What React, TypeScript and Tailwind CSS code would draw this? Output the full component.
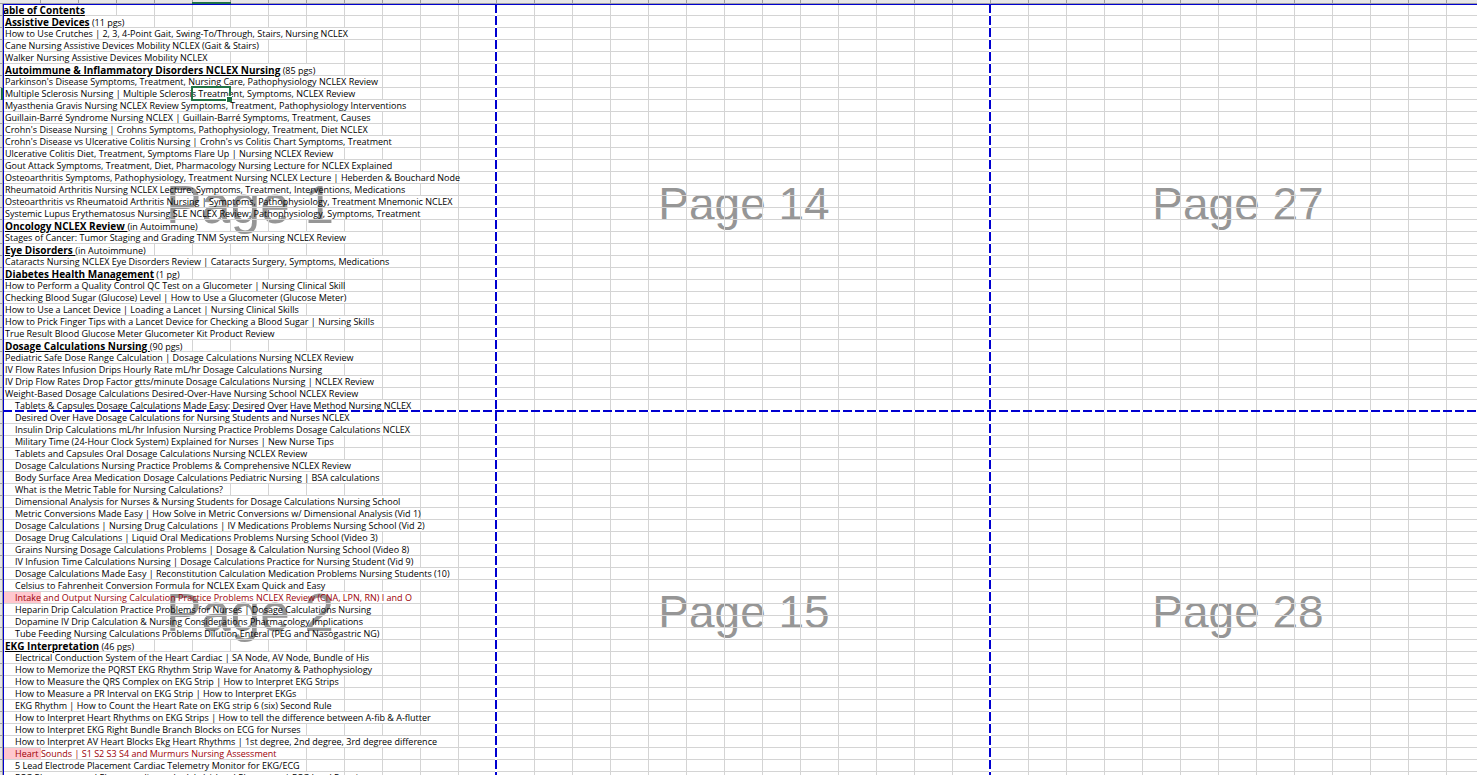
interface Row {
  // number of columns the text spills over
  span: number
  text?: string
  title?: string
  indent?: boolean
  flagged?: boolean
}

const COLUMNS = 39

const rows: Row[] = [
  { title: 'able of Contents', span: 3 },
  { title: 'Assistive Devices', text: '(11 pgs)', span: 4 },
  { text: 'How to Use Crutches | 2, 3, 4-Point Gait, Swing-To/Through, Stairs, Nursing NCLEX', span: 10 },
  { text: 'Cane Nursing Assistive Devices Mobility NCLEX (Gait & Stairs)', span: 7 },
  { text: 'Walker Nursing Assistive Devices Mobility NCLEX', span: 6 },
  { title: 'Autoimmune & Inflammatory Disorders NCLEX Nursing', text: '(85 pgs)', span: 9 },
  { text: 'Parkinson\'s Disease Symptoms, Treatment, Nursing Care, Pathophysiology NCLEX Review', span: 10 },
  { text: 'Multiple Sclerosis Nursing | Multiple Sclerosis Treatment, Symptoms, NCLEX Review', span: 10 },
  { text: 'Myasthenia Gravis Nursing NCLEX Review Symptoms, Treatment, Pathophysiology Interventions', span: 11 },
  { text: 'Guillain-Barré Syndrome Nursing NCLEX | Guillain-Barré Symptoms, Treatment, Causes', span: 10 },
  { text: 'Crohn\'s Disease Nursing | Crohns Symptoms, Pathophysiology, Treatment, Diet NCLEX', span: 10 },
  { text: 'Crohn\'s Disease vs Ulcerative Colitis Nursing | Crohn\'s vs Colitis Chart Symptoms, Treatment', span: 11 },
  { text: 'Ulcerative Colitis Diet, Treatment, Symptoms Flare Up | Nursing NCLEX Review', span: 9 },
  { text: 'Gout Attack Symptoms, Treatment, Diet, Pharmacology Nursing Lecture for NCLEX Explained', span: 11 },
  { text: 'Osteoarthritis Symptoms, Pathophysiology, Treatment Nursing NCLEX Lecture | Heberden & Bouchard Node', span: 12 },
  { text: 'Rheumatoid Arthritis Nursing NCLEX Lecture: Symptoms, Treatment, Interventions, Medications', span: 11 },
  { text: 'Osteoarthritis vs Rheumatoid Arthritis Nursing | Symptoms, Pathophysiology, Treatment Mnemonic NCLEX', span: 12 },
  { text: 'Systemic Lupus Erythematosus Nursing SLE NCLEX Review: Pathophysiology, Symptoms, Treatment', span: 12 },
  { title: 'Oncology NCLEX Review ', text: '(in Autoimmune)', span: 6 },
  { text: 'Stages of Cancer: Tumor Staging and Grading TNM System Nursing NCLEX Review', span: 10 },
  { title: 'Eye Disorders ', text: '(in Autoimmune)', span: 4 },
  { text: 'Cataracts Nursing NCLEX Eye Disorders Review | Cataracts Surgery, Symptoms, Medications', span: 11 },
  { title: 'Diabetes Health Management', text: '(1 pg)', span: 5 },
  { text: 'How to Perform a Quality Control QC Test on a Glucometer | Nursing Clinical Skill', span: 9 },
  { text: 'Checking Blood Sugar (Glucose) Level | How to Use a Glucometer (Glucose Meter)', span: 10 },
  { text: 'How to Use a Lancet Device | Loading a Lancet | Nursing Clinical Skills', span: 8 },
  { text: 'How to Prick Finger Tips with a Lancet Device for Checking a Blood Sugar | Nursing Skills', span: 10 },
  { text: 'True Result Blood Glucose Meter Glucometer Kit Product Review', span: 8 },
  { title: 'Dosage Calculations Nursing ', text: '(90 pgs)', span: 5 },
  { text: 'Pediatric Safe Dose Range Calculation | Dosage Calculations Nursing NCLEX Review', span: 10 },
  { text: 'IV Flow Rates Infusion Drips Hourly Rate mL/hr Dosage Calculations Nursing', span: 9 },
  { text: 'IV Drip Flow Rates Drop Factor gtts/minute Dosage Calculations Nursing | NCLEX Review', span: 10 },
  { text: 'Weight-Based Dosage Calculations Desired-Over-Have Nursing School NCLEX Review', span: 10 },
  { text: 'Tablets & Capsules Dosage Calculations Made Easy: Desired Over Have Method Nursing NCLEX', indent: true, span: 11 },
  { text: 'Desired Over Have Dosage Calculations for Nursing Students and Nurses NCLEX', indent: true, span: 10 },
  { text: 'Insulin Drip Calculations mL/hr Infusion Nursing Practice Problems Dosage Calculations NCLEX', indent: true, span: 11 },
  { text: 'Military Time (24-Hour Clock System) Explained for Nurses | New Nurse Tips', indent: true, span: 9 },
  { text: 'Tablets and Capsules Oral Dosage Calculations Nursing NCLEX Review', indent: true, span: 9 },
  { text: 'Dosage Calculations Nursing Practice Problems & Comprehensive NCLEX Review', indent: true, span: 10 },
  { text: 'Body Surface Area Medication Dosage Calculations Pediatric Nursing | BSA calculations', indent: true, span: 10 },
  { text: 'What is the Metric Table for Nursing Calculations?', indent: true, span: 6 },
  { text: 'Dimensional Analysis for Nurses & Nursing Students for Dosage Calculations Nursing School', indent: true, span: 11 },
  { text: 'Metric Conversions Made Easy | How Solve in Metric Conversions w/ Dimensional Analysis (Vid 1)', indent: true, span: 11 },
  { text: 'Dosage Calculations | Nursing Drug Calculations | IV Medications Problems Nursing School (Vid 2)', indent: true, span: 12 },
  { text: 'Dosage Drug Calculations | Liquid Oral Medications Problems Nursing School (Video 3)', indent: true, span: 10 },
  { text: 'Grains Nursing Dosage Calculations Problems | Dosage & Calculation Nursing School (Video 8)', indent: true, span: 11 },
  { text: 'IV Infusion Time Calculations Nursing | Dosage Calculations Practice for Nursing Student (Vid 9)', indent: true, span: 11 },
  { text: 'Dosage Calculations Made Easy | Reconstitution Calculation Medication Problems Nursing Students (10)', indent: true, span: 12 },
  { text: 'Celsius to Fahrenheit Conversion Formula for NCLEX Exam Quick and Easy', indent: true, span: 9 },
  { text: 'Intake and Output Nursing Calculation Practice Problems NCLEX Review (CNA, LPN, RN) I and O', indent: true, flagged: true, span: 11 },
  { text: 'Heparin Drip Calculation Practice Problems for Nurses | Dosage Calculations Nursing', indent: true, span: 10 },
  { text: 'Dopamine IV Drip Calculation & Nursing Considerations Pharmacology Implications', indent: true, span: 10 },
  { text: 'Tube Feeding Nursing Calculations Problems Dilution Enteral (PEG and Nasogastric NG)', indent: true, span: 10 },
  { title: 'EKG Interpretation', text: '(46 pgs)', span: 4 },
  { text: 'Electrical Conduction System of the Heart Cardiac | SA Node, AV Node, Bundle of His', indent: true, span: 10 },
  { text: 'How to Memorize the PQRST EKG Rhythm Strip Wave for Anatomy & Pathophysiology', indent: true, span: 10 },
  { text: 'How to Measure the QRS Complex on EKG Strip | How to Interpret EKG Strips', indent: true, span: 9 },
  { text: 'How to Measure a PR Interval on EKG Strip | How to Interpret EKGs', indent: true, span: 8 },
  { text: 'EKG Rhythm | How to Count the Heart Rate on EKG strip 6 (six) Second Rule', indent: true, span: 9 },
  { text: 'How to Interpret Heart Rhythms on EKG Strips | How to tell the difference between A-fib & A-flutter', indent: true, span: 11 },
  { text: 'How to Interpret EKG Right Bundle Branch Blocks on ECG for Nurses', indent: true, span: 8 },
  { text: 'How to Interpret AV Heart Blocks Ekg Heart Rhythms | 1st degree, 2nd degree, 3rd degree difference', indent: true, span: 12 },
  { text: 'Heart Sounds | S1 S2 S3 S4 and Murmurs Nursing Assessment', indent: true, flagged: true, span: 8 },
  { text: '5 Lead Electrode Placement Cardiac Telemetry Monitor for EKG/ECG', indent: true, span: 8 },
  { text: 'ECG Placement and Electrocardiography (ekg) | Lead Placement | ECG Lead Practice', indent: true, span: 9 },
]

const pages = [1, 14, 27, 2, 15, 28]

function cellClass(row: Row, first: boolean) {
  if (first)
    return 'pl-0'
  if (row.flagged)
    return 'pl-3 text-[#9c0006] bg-[linear-gradient(#ffc7ce,#ffc7ce)] bg-[length:38px_100%] bg-no-repeat'
  return row.indent ? 'pl-3' : 'pl-0.5'
}

function SheetRow({ row, first }: { row: Row, first: boolean }) {
  return (
    <tr>
      <td colSpan={row.span} className="border-r border-b border-[#d4d4d4] p-0">
        <div className={`h-[11px] whitespace-nowrap ${cellClass(row, first)}`}>
          {row.title && <b className="text-[10px] whitespace-pre underline">{row.title}</b>}
          {row.title && row.text && !row.title.endsWith(' ') && ' '}
          {row.text}
        </div>
      </td>
      {Array.from({ length: COLUMNS - row.span }, (_, i) => (
        <td key={i} className="border-r border-b border-[#d4d4d4] p-0" />
      ))}
    </tr>
  )
}

// Page numbers sit behind the cells
function Watermarks() {
  return (
    <div className="absolute inset-0 grid auto-rows-[408px] grid-cols-[repeat(3,494px)] font-['Liberation_Sans',Arial,sans-serif] text-[#969696]">
      {pages.map(page => (
        <div
          key={page}
          className={`flex items-center justify-center pb-2 leading-none ${page < 10 ? 'text-[53px]' : 'text-[46px]'}`}
        >
          {`Page ${page}`}
        </div>
      ))}
    </div>
  )
}

function PageBreaks() {
  return (
    <>
      <div className="absolute inset-0 flex gap-[492px] border-t border-l border-[#0000d0] pl-[491px]">
        <div className="w-0.5 bg-[repeating-linear-gradient(180deg,#0000d0_0_8px,#fff_8px_11px,#0000d0_11px_12px)]" />
        <div className="w-0.5 bg-[repeating-linear-gradient(180deg,#0000d0_0_8px,#fff_8px_11px,#0000d0_11px_12px)]" />
      </div>
      <div className="absolute inset-0 pt-[406px]">
        <div className="h-0.5 bg-[repeating-linear-gradient(90deg,#0000d0_0_9px,#fff_9px_12px)]" />
      </div>
    </>
  )
}

export default function App() {
  return (
    <div className="flex h-screen flex-col overflow-hidden bg-white font-['Open_Sans',sans-serif] text-[9px] leading-3 text-black">
      <div className="relative h-1 shrink-0 border-b border-[#9f9f9f] bg-[#e6e6e6] pl-[3px]">
        <div className="h-full bg-[repeating-linear-gradient(90deg,#e6e6e6_0_37px,#9f9f9f_37px_38px)]" />
        <div className="absolute top-0.5 left-48 h-0.5 w-[39px] bg-[#217346]" />
      </div>
      <div className="flex min-h-0 flex-1">
        <div className="w-[3px] shrink-0 border-r border-[#9f9f9f] bg-[repeating-linear-gradient(180deg,#e6e6e6_0_11px,#9f9f9f_11px_12px)] pt-[84px]">
          <div className="ml-px h-3 w-0.5 bg-[#217346]" />
        </div>
        <main className="relative min-w-0 flex-1 overflow-hidden">
          <Watermarks />
          <table className="relative w-[1482px] table-fixed border-separate border-spacing-0">
            <colgroup>
              {Array.from({ length: COLUMNS }, (_, i) => <col key={i} className="w-[38px]" />)}
            </colgroup>
            <tbody>
              {rows.map((row, i) => <SheetRow key={i} row={row} first={i === 0} />)}
            </tbody>
          </table>
          <PageBreaks />
          <div className="absolute top-[82px] left-[188px] h-[15px] w-10 border-2 border-[#217346]">
            <div className="absolute -right-[3px] -bottom-[3px] size-1.5 border-t border-l border-white bg-[#217346]" />
          </div>
        </main>
      </div>
    </div>
  )
}
